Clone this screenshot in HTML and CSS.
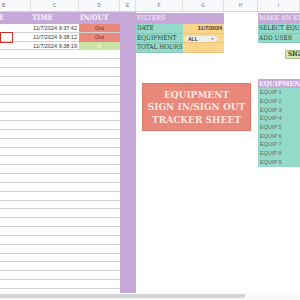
FILE: index.html
```html
<!DOCTYPE html>
<html lang="en">
<head>
    <meta charset="UTF-8">
    <meta name="viewport" content="width=device-width, initial-scale=1.0">
    <title>Equipment Tracker</title>
    <link rel="stylesheet" href="styles.css">
</head>
<body>
    <div class="colheads">
        <span class="ch" style="width:31px">B</span>
        <span class="ch" style="width:48px">C</span>
        <span class="ch" style="width:41px">D</span>
        <span class="ch" style="width:16px">E</span>
        <span class="ch" style="width:47px">F</span>
        <span class="ch" style="width:41px">G</span>
        <span class="ch" style="width:34px">H</span>
        <span class="ch" style="width:42px">I</span>
    </div>
    <div class="sheet">
        <div class="log">
            <div class="log-head">
                <span class="name-head">NAME</span>
                <span>TIME</span>
                <span>IN/OUT</span>
            </div>
            <div class="row"><span></span><span class="time">11/7/2024 9:37:42</span><span class="state out">Out</span></div>
            <div class="row"><span><i class="picked"></i></span><span class="time">11/7/2024 9:38:12</span><span class="state out">Out</span></div>
            <div class="row"><span></span><span class="time">11/7/2024 9:38:19</span><span class="state in">In</span></div>
            <div class="row"></div><div class="row"></div><div class="row"></div><div class="row"></div>
            <div class="row"></div><div class="row"></div><div class="row"></div><div class="row"></div>
            <div class="row"></div><div class="row"></div><div class="row"></div><div class="row"></div>
            <div class="row"></div><div class="row"></div><div class="row"></div><div class="row"></div>
            <div class="row"></div><div class="row"></div><div class="row"></div><div class="row"></div>
            <div class="row"></div><div class="row"></div><div class="row"></div><div class="row"></div>
            <div class="row"></div><div class="row"></div><div class="row"></div>
        </div>
        <div class="divider"></div>
        <div class="panels">
            <div class="main">
                <div class="filters">
                    <div class="panel-head">FILTERS</div>
                    <div class="f-row"><span class="f-label">DATE</span><span class="f-val date">11/7/2024</span></div>
                    <div class="f-row"><span class="f-label">EQUIPMENT</span><span class="f-val"><span class="chip">ALL <b>&#9660;</b></span></span></div>
                    <div class="f-row"><span class="f-label">TOTAL HOURS</span><span class="f-val"></span></div>
                </div>
                <div class="title">EQUIPMENT<br>SIGN IN/SIGN OUT<br>TRACKER SHEET</div>
            </div>
            <div class="side">
                <div class="make">
                    <div class="panel-head">MAKE AN ENTRY</div>
                    <div class="side-row">SELECT EQUIPMENT</div>
                    <div class="side-row">ADD USER</div>
                </div>
                <div class="sign">SIGN IN</div>
                <div class="equip">
                    <div class="panel-head">EQUIPMENT LIST</div>
                    <div class="equip-row">EQUIP 1</div>
                    <div class="equip-row">EQUIP 2</div>
                    <div class="equip-row">EQUIP 3</div>
                    <div class="equip-row">EQUIP 4</div>
                    <div class="equip-row">EQUIP 5</div>
                    <div class="equip-row">EQUIP 6</div>
                    <div class="equip-row">EQUIP 7</div>
                    <div class="equip-row">EQUIP 8</div>
                    <div class="equip-row">EQUIP 9</div>
                </div>
            </div>
        </div>
    </div>
    <div class="scroll"><div class="thumb"></div></div>
</body>
</html>
```
FILE: styles.css
```css
body {
    margin: 0;
    width: 300px;
    height: 300px;
    overflow: hidden;
    background: #fff;
    font-family: "Liberation Sans", Arial, sans-serif;
}
.colheads {
    display: flex;
    height: 12px;
    background: #f8f9fa;
    border-bottom: 1px solid #d6d6d6;
    box-sizing: border-box;
}
.ch {
    flex: none;
    border-right: 1px solid #e0e0e0;
    box-sizing: border-box;
    font-size: 5px;
    color: #777;
    text-align: center;
    line-height: 11px;
}
.colheads .ch:first-child {
    text-align: left;
    padding-left: 2px;
}
.sheet {
    display: flex;
    height: 281px;
    overflow: hidden;
}
.log {
    width: 120px;
    flex: none;
}
.log-head {
    display: grid;
    grid-template-columns: 31px 48px 41px;
    height: 12px;
    background: #c6a9d9;
    color: #fbf6ff;
    font-family: "DejaVu Serif", serif;
    font-stretch: condensed;
    font-weight: bold;
    font-size: 7.5px;
    line-height: 12px;
}
.log-head span {
    padding-left: 1px;
    white-space: nowrap;
}
.log-head .name-head {
    margin-left: -21px;
}
.row {
    display: grid;
    grid-template-columns: 31px 48px 41px;
    height: 8.83px;
    box-sizing: border-box;
    border-bottom: 1px solid #d3d3d3;
    font-size: 5.5px;
    line-height: 8px;
}
.time {
    text-align: right;
    padding-right: 2px;
    color: #333;
}
.state {
    text-align: center;
}
.out {
    background: #e8897a;
    color: #7a2318;
}
.in {
    background: #c9e2a5;
    color: #fff;
}
.picked {
    display: block;
    width: 13px;
    height: 11px;
    margin-top: -1px;
    border: 1px solid #d3302a;
    box-sizing: border-box;
}
.divider {
    width: 16px;
    flex: none;
    height: 281px;
    background: #c6a9d9;
}
.panels {
    display: flex;
    flex: 1;
}
.main {
    width: 122px;
    flex: none;
}
.panel-head {
    height: 11px;
    margin-top: 1px;
    background: #c6a9d9;
    color: #fbf6ff;
    font-family: "DejaVu Serif", serif;
    font-stretch: condensed;
    font-size: 7px;
    line-height: 11px;
    padding-left: 1px;
    white-space: nowrap;
    overflow: hidden;
}
.filters {
    width: 88px;
}
.f-row {
    display: flex;
    height: 9.67px;
    font-family: "DejaVu Serif", serif;
    font-stretch: condensed;
    font-size: 6.5px;
    line-height: 9.5px;
    color: #2d3b38;
}
.f-label {
    width: 47px;
    background: #93dbc8;
    padding-left: 1px;
    white-space: nowrap;
    border-bottom: 1px solid #83c7b6;
    box-sizing: border-box;
}
.f-val {
    width: 41px;
    background: #fcd58d;
    border-bottom: 1px solid #ecc47c;
    box-sizing: border-box;
}
.date {
    text-align: right;
    padding-right: 2px;
    font-family: "Liberation Sans", Arial, sans-serif;
    font-stretch: normal;
    font-weight: bold;
    font-size: 5.5px;
}
.chip {
    display: flex;
    justify-content: space-between;
    width: 32px;
    height: 6px;
    margin: 2px 0 0 2px;
    padding: 0 3px 0 3px;
    box-sizing: border-box;
    background: #eceef0;
    border-radius: 3px;
    font-family: "Liberation Sans", Arial, sans-serif;
    font-stretch: normal;
    font-size: 5px;
    font-weight: bold;
    line-height: 6px;
    color: #333;
}
.chip b {
    font-size: 3px;
}
.title {
    width: 109px;
    height: 48px;
    margin: 30px 0 0 6px;
    box-sizing: border-box;
    padding-top: 5px;
    background: #e8877a;
    border: 1px solid #d9786b;
    color: #fde6df;
    font-family: "DejaVu Serif", serif;
    font-stretch: condensed;
    font-weight: bold;
    font-size: 10px;
    line-height: 12.5px;
    text-align: center;
    white-space: nowrap;
}
.side {
    width: 42px;
    flex: none;
}
.make {
    white-space: nowrap;
    overflow: hidden;
}
.side-row {
    height: 9.67px;
    background: #93dbc8;
    border-bottom: 1px solid #83c7b6;
    box-sizing: border-box;
    font-family: "DejaVu Serif", serif;
    font-stretch: condensed;
    font-size: 6.5px;
    line-height: 9.5px;
    padding-left: 1px;
    color: #2d3b38;
}
.sign {
    width: 30px;
    height: 9px;
    margin: 7px 0 0 27px;
    box-sizing: border-box;
    background: #d9e8b4;
    border: 1px solid #a9b98a;
    border-radius: 1px;
    font-family: "DejaVu Serif", serif;
    font-stretch: condensed;
    font-weight: bold;
    font-size: 6.5px;
    line-height: 7px;
    padding-left: 2px;
    color: #2b3320;
    white-space: nowrap;
}
.equip {
    margin-top: 19px;
    white-space: nowrap;
    overflow: hidden;
}
.equip .panel-head {
    height: 9px;
    line-height: 9px;
    font-weight: bold;
}
.equip-row {
    height: 8.7px;
    background: #93dbc8;
    font-size: 5.5px;
    line-height: 8.7px;
    padding-left: 2px;
    color: #5d6d69;
}
.scroll {
    height: 7px;
    background: #f8f9fa;
    padding-top: 1px;
    box-sizing: border-box;
}
.thumb {
    width: 245px;
    height: 4px;
    background: #d6d6d6;
}
```
